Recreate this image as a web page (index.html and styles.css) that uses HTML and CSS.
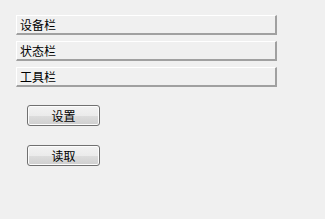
FILE: index.html
```html
<!DOCTYPE html>
<html lang="zh-CN">
<head>
    <meta charset="UTF-8">
    <title>设置</title>
    <link rel="stylesheet" href="styles.css">
</head>
<body>
    <div class="panel">
        <div class="bars">
            <div class="bar">设备栏</div>
            <div class="bar">状态栏</div>
            <div class="bar">工具栏</div>
        </div>

        <div class="actions">
            <button type="button" class="btn">设置</button>
            <button type="button" class="btn">读取</button>
        </div>
    </div>
</body>
</html>
```

FILE: styles.css
```css
html, body {
    margin: 0;
    padding: 0;
    background-color: #f0f0f0;
}

body {
    font-family: "Noto Sans CJK SC", "Liberation Sans", sans-serif;
    font-size: 12px;
    color: #000;
}

.panel {
    padding: 15px 0 0 16px;
}

.bars {
    display: flex;
    flex-direction: column;
    gap: 6px;
    width: 261px;
}

.bar {
    box-sizing: border-box;
    height: 20px;
    line-height: 17px;
    padding-left: 3px;
    border-top: 1px solid #ffffff;
    border-left: 1px solid #ffffff;
    border-right: 2px solid #a0a0a0;
    border-bottom: 2px solid #a0a0a0;
}

.actions {
    display: flex;
    flex-direction: column;
    align-items: flex-start;
    gap: 19px;
    margin-top: 18px;
    padding-left: 11px;
}

.btn {
    box-sizing: border-box;
    width: 73px;
    height: 21px;
    padding: 0;
    font-family: inherit;
    font-size: 12px;
    line-height: 17px;
    color: #000;
    border: 1px solid #707070;
    border-radius: 3px;
    background: linear-gradient(to bottom, #f2f2f2 0%, #ebebeb 50%, #dddddd 51%, #cfcfcf 100%);
    box-shadow: inset 0 0 0 1px #fcfcfc;
}
```
